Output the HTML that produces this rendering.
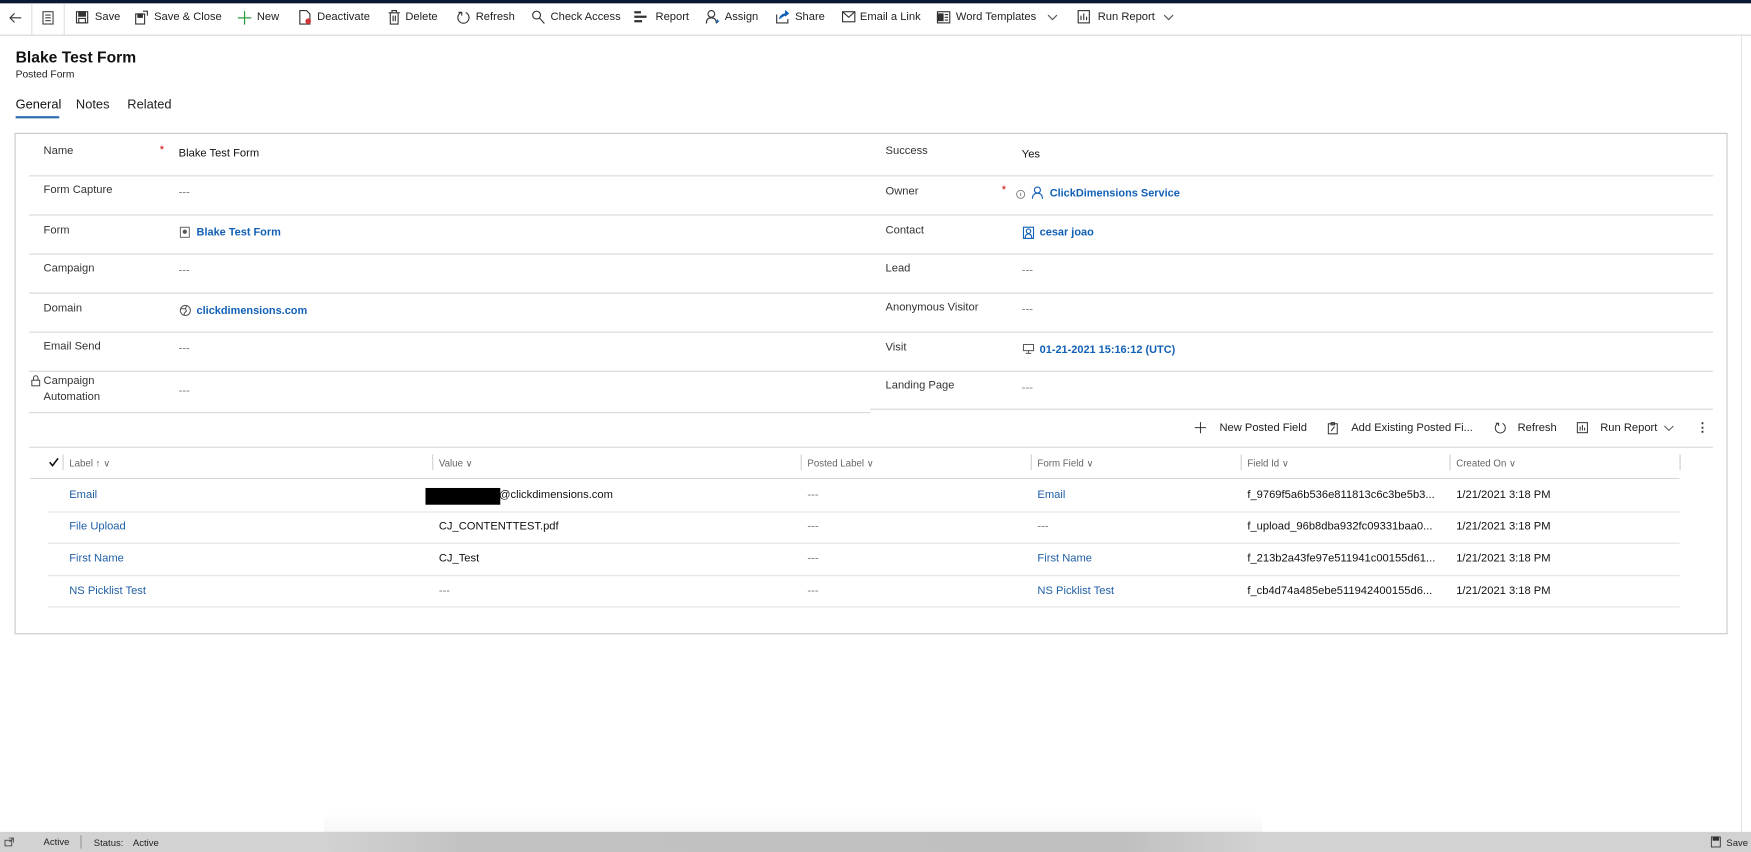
<!DOCTYPE html>
<html><head><meta charset="utf-8">
<style>
*{margin:0;padding:0;box-sizing:border-box}
html,body{width:1751px;height:852px;overflow:hidden;background:#fff}
#c{position:absolute;left:0;top:0;width:1568px;height:763px;transform:scale(1.11671,1.11664);transform-origin:0 0;font-family:"Liberation Sans",sans-serif;color:#333}
.t{position:absolute;white-space:nowrap;transform:translateY(-50%);line-height:1}
.a{position:absolute}
.tb{font-size:10px;color:#222}
.lb{font-size:10px;color:#333}
.v{font-size:10px;color:#111}
.lk{font-size:9.8px;color:#1160b7;font-weight:bold}
.hd{font-size:8.7px;color:#666}
.gl{font-size:10px;color:#1f5fa6}
.hl{position:absolute;height:1px;background:#d8d8d8}
.vl{position:absolute;width:1px;background:#d0d0d0}
.dash{font-size:10px;color:#777}
svg{position:absolute;overflow:visible}
</style></head><body><div id="c">
<div class="a" style="left:0;top:0;width:1568px;height:2.5px;background:#0b1a33"></div>
<div class="hl" style="left:0;top:31px;width:1568px;background:#d6d6d6"></div>
<div class="vl" style="left:28px;top:3px;height:28px;background:#e0e0e0"></div>
<div class="vl" style="left:57px;top:3px;height:28px;background:#e0e0e0"></div>
<svg style="left:8px;top:11px" width="12" height="10" fill="none" stroke="#333" stroke-width="1"><path d="M11 5H1M5 1L1 5l4 4"/></svg>
<svg style="left:38px;top:10px" width="10" height="12" fill="none" stroke="#444" stroke-width="1"><rect x="0.5" y="0.5" width="9" height="11"/><path d="M2.5 3.5h5M2.5 6h5M2.5 8.5h5"/></svg>
<svg style="left:68px;top:10px" width="11" height="11" fill="none" stroke="#333"><rect x="0.5" y="0.5" width="10" height="10"/><rect x="2.5" y="0.5" width="6" height="4" fill="#333"/><rect x="2.5" y="6.5" width="6" height="4"/></svg>
<div class="t tb" style="left:85px;top:16px">Save</div>
<svg style="left:121px;top:9px" width="12" height="13" fill="none" stroke="#333"><rect x="0.5" y="3.5" width="8" height="9"/><rect x="2.5" y="3.5" width="4" height="3" fill="#333"/><path d="M7 1h4v4"/></svg>
<div class="t tb" style="left:138px;top:16px">Save &amp; Close</div>
<svg style="left:213px;top:10px" width="12" height="12" stroke="#2a9d3f" stroke-width="1.1"><path d="M6 0v12M0 6h12"/></svg>
<div class="t tb" style="left:230px;top:16px">New</div>
<svg style="left:268px;top:9px" width="11" height="13" fill="none" stroke="#333"><path d="M0.5 0.5h6l3 3v9h-9z"/><circle cx="8" cy="10" r="2.5" fill="#d13438" stroke="none"/></svg>
<div class="t tb" style="left:284px;top:16px">Deactivate</div>
<svg style="left:348px;top:9px" width="10" height="13" fill="none" stroke="#333"><path d="M0 2.5h10M3 2.5V0.5h4v2M1.5 2.5v10h7v-10M4 5v5M6 5v5"/></svg>
<div class="t tb" style="left:363px;top:16px">Delete</div>
<svg style="left:409px;top:10px" width="12" height="12" fill="none" stroke="#333"><path d="M4 1.2A5 5 0 1 0 8 1.2"/><path d="M1.5 1h3v3"/></svg>
<div class="t tb" style="left:426px;top:16px">Refresh</div>
<svg style="left:476px;top:9px" width="12" height="13" fill="none" stroke="#333"><circle cx="4.5" cy="4.5" r="3.5"/><path d="M7 7l4.5 5"/></svg>
<div class="t tb" style="left:493px;top:16px">Check Access</div>
<svg style="left:568px;top:10px" width="12" height="11" fill="#333"><rect x="0" y="0" width="6" height="2"/><rect x="0" y="4" width="11" height="2"/><rect x="0" y="8" width="7" height="2"/></svg>
<div class="t tb" style="left:587px;top:16px">Report</div>
<svg style="left:632px;top:9px" width="13" height="13" fill="none" stroke="#333"><circle cx="5" cy="3.5" r="3"/><path d="M0.5 12c0-4 2-5 4.5-5s4.5 1 4.5 5"/><path d="M9 10h3M10.5 8.5v3" stroke="#1160b7"/></svg>
<div class="t tb" style="left:649px;top:16px">Assign</div>
<svg style="left:695px;top:9px" width="12" height="12" fill="none" stroke="#333"><path d="M0.5 4v7.5h10V8"/><path d="M3 8c1-4 4-5 8-5M8 0.5l3 2.5-3 2.5" stroke="#1160b7" fill="#1160b7"/></svg>
<div class="t tb" style="left:712px;top:16px">Share</div>
<svg style="left:754px;top:10px" width="12" height="11" fill="none" stroke="#333"><rect x="0.5" y="0.5" width="11" height="9"/><path d="M0.5 0.5l5.5 5 5.5-5"/></svg>
<div class="t tb" style="left:770px;top:16px">Email a Link</div>
<svg style="left:839px;top:10px" width="12" height="11" fill="none" stroke="#333"><rect x="0.5" y="0.5" width="11" height="10"/><rect x="0.5" y="2.5" width="5" height="6" fill="#333"/><path d="M7 3h3M7 5.5h3M7 8h3"/></svg>
<div class="t tb" style="left:856px;top:16px">Word Templates</div>
<svg style="left:938px;top:13px" width="9" height="5" fill="none" stroke="#555"><path d="M0.5 0.5l4 4 4-4"/></svg>
<svg style="left:965px;top:9px" width="12" height="12" fill="none" stroke="#333"><rect x="0.5" y="0.5" width="10" height="11"/><path d="M3 9V5M5.5 9V3M8 9V6"/></svg>
<div class="t tb" style="left:983px;top:16px">Run Report</div>
<svg style="left:1042px;top:13px" width="9" height="5" fill="none" stroke="#555"><path d="M0.5 0.5l4 4 4-4"/></svg>

<div class="t" style="left:14px;top:51px;font-size:14px;font-weight:bold;color:#111">Blake Test Form</div>
<div class="t" style="left:14px;top:66.5px;font-size:9.2px;color:#222">Posted Form</div>
<div class="t" style="left:14px;top:95px;font-size:11.5px;color:#111">General</div>
<div class="t" style="left:68px;top:95px;font-size:11.5px;color:#222">Notes</div>
<div class="t" style="left:114px;top:95px;font-size:11.5px;color:#222">Related</div>
<div class="a" style="left:14px;top:104px;width:39px;height:2px;background:#2f6cb5"></div>

<div class="a" style="left:13px;top:119px;width:1534px;height:449px;border:1px solid #c8c8c8"></div>
<div class="vl" style="left:1559px;top:32px;height:713px;background:#e4e4e4"></div>

<div class="t lb" style="left:39px;top:136px">Name</div>
<div class="t" style="left:143px;top:135px;font-size:10px;color:#c00">*</div>
<div class="t v" style="left:160px;top:138px">Blake Test Form</div>
<div class="hl" style="left:26px;top:157px;width:753px"></div>
<div class="t lb" style="left:39px;top:171px">Form Capture</div>
<div class="t dash" style="left:160px;top:173px">---</div>
<div class="hl" style="left:26px;top:192px;width:753px"></div>
<div class="t lb" style="left:39px;top:207px">Form</div>
<svg style="left:161px;top:203px" width="9" height="10" fill="none" stroke="#555" stroke-width="0.8"><rect x="0.5" y="0.5" width="8" height="9"/><circle cx="4.5" cy="4.5" r="1.5" fill="#555"/></svg>
<div class="t lk" style="left:176px;top:208.5px">Blake Test Form</div>
<div class="hl" style="left:26px;top:227px;width:753px"></div>
<div class="t lb" style="left:39px;top:241px">Campaign</div>
<div class="t dash" style="left:160px;top:243px">---</div>
<div class="hl" style="left:26px;top:262px;width:753px"></div>
<div class="t lb" style="left:39px;top:277px">Domain</div>
<svg style="left:161px;top:273px" width="10" height="10" fill="none" stroke="#555" stroke-width="0.9"><circle cx="5" cy="5" r="4.5"/><path d="M1 3.5h4l1 2-2 2v2M6 1l-1 2.5"/></svg>
<div class="t lk" style="left:176px;top:278.5px">clickdimensions.com</div>
<div class="hl" style="left:26px;top:297px;width:753px"></div>
<div class="t lb" style="left:39px;top:311px">Email Send</div>
<div class="t dash" style="left:160px;top:313px">---</div>
<div class="hl" style="left:26px;top:332px;width:753px"></div>
<svg style="left:28px;top:336px" width="8" height="10" fill="none" stroke="#444" stroke-width="0.9"><path d="M2 4.5V2.5a2 2 0 0 1 4 0v2"/><rect x="0.5" y="4.5" width="7" height="5"/></svg>
<div class="t lb" style="left:39px;top:342px">Campaign</div>
<div class="t lb" style="left:39px;top:356px">Automation</div>
<div class="t dash" style="left:160px;top:351px">---</div>
<div class="hl" style="left:26px;top:369px;width:753px"></div>

<div class="t lb" style="left:793px;top:136px">Success</div>
<div class="t v" style="left:915px;top:139px">Yes</div>
<div class="hl" style="left:779px;top:157px;width:755px"></div>
<div class="t lb" style="left:793px;top:172px">Owner</div>
<div class="t" style="left:897px;top:171px;font-size:10px;color:#c00">*</div>
<svg style="left:910px;top:170px" width="8" height="8" fill="none" stroke="#777" stroke-width="0.8"><circle cx="4" cy="4" r="3.6"/><path d="M4 2.5v3"/></svg>
<svg style="left:924px;top:167px" width="10" height="11" fill="none" stroke="#1160b7" stroke-width="1"><circle cx="5" cy="3.2" r="2.7"/><path d="M0.5 11c0-3.5 2-5 4.5-5s4.5 1.5 4.5 5"/></svg>
<div class="t lk" style="left:940px;top:174px">ClickDimensions Service</div>
<div class="hl" style="left:779px;top:192px;width:755px"></div>
<div class="t lb" style="left:793px;top:207px">Contact</div>
<svg style="left:916px;top:203px" width="10" height="11" fill="none" stroke="#1160b7" stroke-width="1"><rect x="0.5" y="0.5" width="9" height="10"/><circle cx="5" cy="4" r="2"/><path d="M2 10.5c0-3 1.5-4 3-4s3 1 3 4"/></svg>
<div class="t lk" style="left:931px;top:208.5px">cesar joao</div>
<div class="hl" style="left:779px;top:227px;width:755px"></div>
<div class="t lb" style="left:793px;top:241px">Lead</div>
<div class="t dash" style="left:915px;top:243px">---</div>
<div class="hl" style="left:779px;top:262px;width:755px"></div>
<div class="t lb" style="left:793px;top:276px">Anonymous Visitor</div>
<div class="t dash" style="left:915px;top:278px">---</div>
<div class="hl" style="left:779px;top:297px;width:755px"></div>
<div class="t lb" style="left:793px;top:312px">Visit</div>
<svg style="left:916px;top:308px" width="10" height="9" fill="none" stroke="#555" stroke-width="0.9"><rect x="0.5" y="0.5" width="9" height="5.5"/><path d="M5 6v2M2.5 8.5h5"/></svg>
<div class="t lk" style="left:931px;top:313.5px">01-21-2021 15:16:12 (UTC)</div>
<div class="hl" style="left:779px;top:332px;width:755px"></div>
<div class="t lb" style="left:793px;top:346px">Landing Page</div>
<div class="t dash" style="left:915px;top:348px">---</div>
<div class="hl" style="left:779px;top:366px;width:755px"></div>

<svg style="left:1070px;top:378px" width="10" height="10" stroke="#333" stroke-width="0.9"><path d="M5 0v10M0 5h10"/></svg>
<div class="t tb" style="left:1092px;top:384px">New Posted Field</div>
<svg style="left:1189px;top:378px" width="9" height="11" fill="none" stroke="#333" stroke-width="0.9"><rect x="0.5" y="1.5" width="8" height="9"/><path d="M3 0.5h3v2H3zM3 8l3-4"/></svg>
<div class="t tb" style="left:1210px;top:384px">Add Existing Posted Fi...</div>
<svg style="left:1338px;top:378px" width="11" height="11" fill="none" stroke="#333" stroke-width="0.9"><path d="M3.5 1.2A4.5 4.5 0 1 0 7.5 1.2"/><path d="M1.5 1h2.5v2.5"/></svg>
<div class="t tb" style="left:1359px;top:384px">Refresh</div>
<svg style="left:1412px;top:378px" width="10" height="10" fill="none" stroke="#333" stroke-width="0.9"><rect x="0.5" y="0.5" width="9" height="9"/><path d="M3 7.5V4M5 7.5V2.5M7 7.5V5"/></svg>
<div class="t tb" style="left:1433px;top:384px">Run Report</div>
<svg style="left:1490px;top:381px" width="9" height="5" fill="none" stroke="#555" stroke-width="0.9"><path d="M0.5 0.5l4 4 4-4"/></svg>
<div class="t" style="left:1519px;top:384px;font-size:11px;color:#333;font-weight:bold">&#8942;</div>
<div class="hl" style="left:26px;top:400px;width:1508px"></div>

<svg style="left:44px;top:410px" width="9" height="8" fill="none" stroke="#111" stroke-width="1.4"><path d="M0.5 4l2.5 3 5-6.5"/></svg>
<div class="vl" style="left:56px;top:407px;height:14px"></div>
<div class="t hd" style="left:62px;top:415px">Label &#8593; &#8744;</div>
<div class="vl" style="left:387px;top:407px;height:14px"></div>
<div class="t hd" style="left:393px;top:415px">Value &#8744;</div>
<div class="vl" style="left:717px;top:407px;height:14px"></div>
<div class="t hd" style="left:723px;top:415px">Posted Label &#8744;</div>
<div class="vl" style="left:923px;top:407px;height:14px"></div>
<div class="t hd" style="left:929px;top:415px">Form Field &#8744;</div>
<div class="vl" style="left:1111px;top:407px;height:14px"></div>
<div class="t hd" style="left:1117px;top:415px">Field Id &#8744;</div>
<div class="vl" style="left:1298px;top:407px;height:14px"></div>
<div class="t hd" style="left:1304px;top:415px">Created On &#8744;</div>
<div class="vl" style="left:1504px;top:407px;height:14px"></div>
<div class="hl" style="left:27px;top:428px;width:1477px"></div>

<div class="t gl" style="left:62px;top:444px">Email</div>
<div class="a" style="left:381px;top:437px;width:67px;height:15px;background:#000"></div>
<div class="t v" style="left:447px;top:444px">@clickdimensions.com</div>
<div class="t dash" style="left:723px;top:444px">---</div>
<div class="t gl" style="left:929px;top:444px">Email</div>
<div class="t v" style="left:1117px;top:444px">f_9769f5a6b536e811813c6c3be5b3...</div>
<div class="t v" style="left:1304px;top:444px">1/21/2021 3:18 PM</div>
<div class="hl" style="left:43px;top:458px;width:1461px;background:#e4e4e4"></div>

<div class="t gl" style="left:62px;top:472px">File Upload</div>
<div class="t v" style="left:393px;top:472px">CJ_CONTENTTEST.pdf</div>
<div class="t dash" style="left:723px;top:472px">---</div>
<div class="t dash" style="left:929px;top:472px">---</div>
<div class="t v" style="left:1117px;top:472px">f_upload_96b8dba932fc09331baa0...</div>
<div class="t v" style="left:1304px;top:472px">1/21/2021 3:18 PM</div>
<div class="hl" style="left:43px;top:486px;width:1461px;background:#e4e4e4"></div>

<div class="t gl" style="left:62px;top:501px">First Name</div>
<div class="t v" style="left:393px;top:501px">CJ_Test</div>
<div class="t dash" style="left:723px;top:501px">---</div>
<div class="t gl" style="left:929px;top:501px">First Name</div>
<div class="t v" style="left:1117px;top:501px">f_213b2a43fe97e511941c00155d61...</div>
<div class="t v" style="left:1304px;top:501px">1/21/2021 3:18 PM</div>
<div class="hl" style="left:43px;top:515px;width:1461px;background:#e4e4e4"></div>

<div class="t gl" style="left:62px;top:530px">NS Picklist Test</div>
<div class="t dash" style="left:393px;top:530px">---</div>
<div class="t dash" style="left:723px;top:530px">---</div>
<div class="t gl" style="left:929px;top:530px">NS Picklist Test</div>
<div class="t v" style="left:1117px;top:530px">f_cb4d74a485ebe511942400155d6...</div>
<div class="t v" style="left:1304px;top:530px">1/21/2021 3:18 PM</div>
<div class="hl" style="left:43px;top:543px;width:1461px;background:#e4e4e4"></div>

<div class="a" style="left:290px;top:728px;width:840px;height:17px;background:linear-gradient(to bottom,rgba(0,0,0,0),rgba(0,0,0,0.03))"></div>
<div class="a" style="left:0;top:745px;width:1568px;height:18px;background:#d2d2d2"></div>
<div class="a" style="left:290px;top:745px;width:840px;height:18px;background:linear-gradient(to right,#d2d2d2,#c2c2c2 15%,#c0c0c0 85%,#d2d2d2)"></div>
<svg style="left:4px;top:750px" width="9" height="8" fill="none" stroke="#444" stroke-width="0.8"><rect x="0.5" y="2.5" width="6" height="5"/><path d="M4 0.5h4v4M8 0.5L4.5 4"/></svg>
<div class="t" style="left:39px;top:754px;font-size:8.5px;color:#222">Active</div>
<div class="vl" style="left:72px;top:748px;height:12px;background:#999"></div>
<div class="t" style="left:84px;top:755px;font-size:8.5px;color:#222">Status:</div>
<div class="t" style="left:119px;top:755px;font-size:8.5px;color:#222">Active</div>
<svg style="left:1532px;top:749px" width="9" height="10" fill="none" stroke="#333" stroke-width="0.8"><rect x="0.5" y="0.5" width="8" height="9"/><rect x="2" y="0.5" width="5" height="3" fill="#333"/></svg>
<div class="t" style="left:1546px;top:755px;font-size:8.5px;color:#222">Save</div>
</div></body></html>
